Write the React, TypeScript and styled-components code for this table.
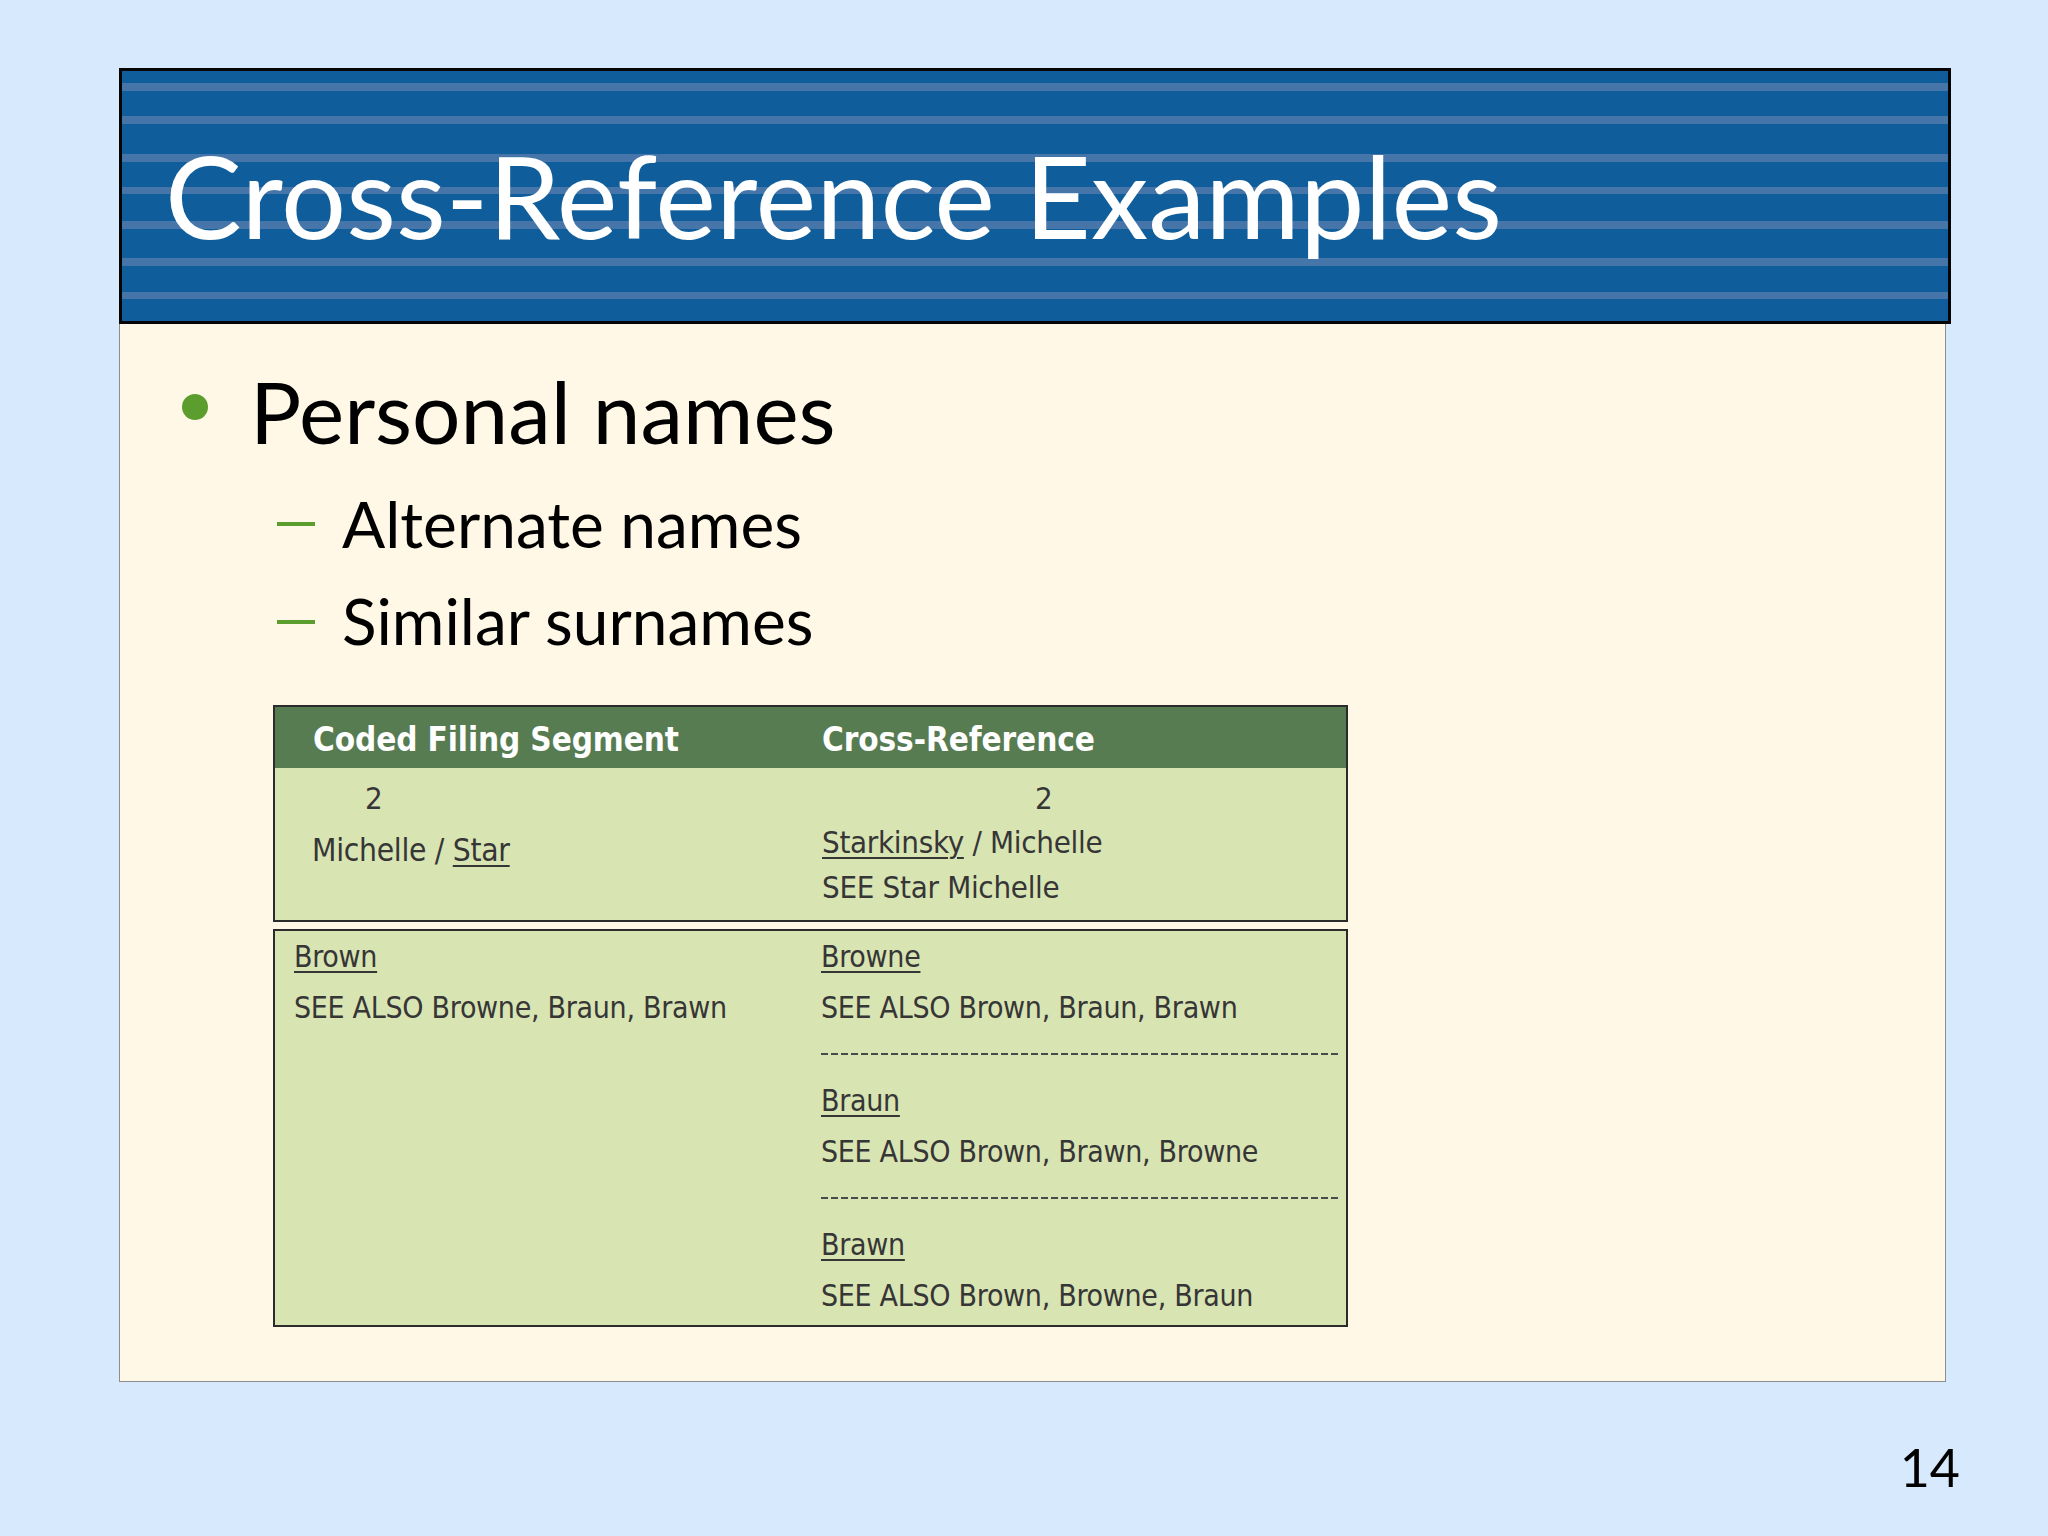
import React from "react";
import styled, { createGlobalStyle } from "styled-components";

const GlobalStyle = createGlobalStyle`
  html, body { margin: 0; padding: 0; background: #d7e9fc; }
  body { font-family: Lato, "Open Sans", sans-serif; }
`;

const Page = styled.div`
  width: 2048px;
  height: 1536px;
  box-sizing: border-box;
  padding: 68px 0 0 119px;
  display: flex;
  flex-direction: column;
  background: #d7e9fc;
`;

const Slide = styled.div`
  width: 1832px;
  display: flex;
  flex-direction: column;
`;

const B = "#0f5e9b";
const S = "#4676a9";

const TitleBar = styled.header`
  box-sizing: border-box;
  height: 256px;
  border: 3px solid #050505;
  padding: 66px 0 0 43px;
  background: linear-gradient(
    to bottom,
    ${B} 0 12px, ${S} 12px 20px, ${B} 20px 45px, ${S} 45px 53px,
    ${B} 53px 83px, ${S} 83px 91px, ${B} 91px 116px, ${S} 116px 123px,
    ${B} 123px 150px, ${S} 150px 158px, ${B} 158px 187px, ${S} 187px 195px,
    ${B} 195px 221px, ${S} 221px 228px, ${B} 228px
  );
`;

const Title = styled.h1`
  margin: 0;
  font-family: Lato, sans-serif;
  font-weight: 400;
  font-size: 115px;
  line-height: 1;
  color: #ffffff;
  white-space: nowrap;
`;

const Body = styled.section`
  box-sizing: border-box;
  width: 1827px;
  height: 1058px;
  background: #fff8e6;
  border: 1px solid #8d8d8d;
  border-top: none;
  padding: 36px 0 0 62px;
  display: flex;
  flex-direction: column;
`;

const MainItem = styled.div`
  display: flex;
  align-items: center;
  gap: 42px;
  font-family: Lato, sans-serif;
  font-size: 85.5px;
  line-height: 1.2;
  color: #000;
`;

const Dot = styled.span`
  width: 26px;
  height: 26px;
  border-radius: 50%;
  background: #5b9e2e;
  margin-bottom: 8px;
  flex: none;
`;

const SubList = styled.div`
  display: flex;
  flex-direction: column;
  gap: 21px;
  margin: 23px 0 0 95px;
`;

const SubItem = styled.div`
  display: flex;
  align-items: center;
  gap: 27px;
  font-family: Lato, sans-serif;
  font-size: 64px;
  line-height: 1.2;
  color: #000;
`;

const Dash = styled.span`
  width: 38px;
  height: 4px;
  background: #5b9e2e;
  flex: none;
`;

const TableWrap = styled.div`
  margin: 45px 0 0 91px;
  width: 1075px;
  display: flex;
  flex-direction: column;
  gap: 7px;
  font-family: "Liberation Sans Narrow", "DejaVu Sans Condensed", "Roboto Condensed", Roboto, sans-serif;
  color: #363636;
`;

const Box = styled.div`
  box-sizing: border-box;
  border: 2px solid #2b2b2b;
  background: #d9e4b3;
  display: grid;
  grid-template-columns: 545px 1fr;
`;

const HeadCell = styled.div<{ $pad: number }>`
  height: 61px;
  background: #577c52;
  color: #ffffff;
  font-weight: 700;
  font-size: 33px;
  letter-spacing: -0.1px;
  display: flex;
  align-items: center;
  padding-left: ${(p) => p.$pad}px;
  padding-top: 4px;
  box-sizing: border-box;
`;

const Cell = styled.div<{ $pad: number; $top: number; $bottom: number }>`
  display: flex;
  flex-direction: column;
  padding: ${(p) => p.$top}px 0 ${(p) => p.$bottom}px ${(p) => p.$pad}px;
`;

const Line = styled.div<{ $h: number; $indent?: number; $gap?: number; $size?: number }>`
  height: ${(p) => p.$h}px;
  line-height: ${(p) => p.$h}px;
  font-size: ${(p) => p.$size ?? 30}px;
  letter-spacing: -0.3px;
  white-space: nowrap;
  margin-left: ${(p) => p.$indent ?? 0}px;
  margin-top: ${(p) => p.$gap ?? 0}px;
`;

const U = styled.span`
  text-decoration: underline;
  text-decoration-thickness: 2px;
  text-underline-offset: 4px;
`;

const Divider = styled.div`
  height: 42px;
  display: flex;
  align-items: center;
  padding-right: 7px;
  &::before {
    content: "";
    flex: 1;
    height: 2px;
    background: repeating-linear-gradient(to right, #4a4a4a 0 7px, transparent 7px 10px);
  }
`;

const Footer = styled.div`
  display: flex;
  justify-content: flex-end;
  padding-right: 88px;
  margin-top: 59px;
  font-family: Lato, sans-serif;
  font-size: 52px;
  line-height: 1;
  color: #000;
`;

const crossRefs = [
  { name: "Browne", see: "SEE ALSO Brown, Braun, Brawn" },
  { name: "Braun", see: "SEE ALSO Brown, Brawn, Browne" },
  { name: "Brawn", see: "SEE ALSO Brown, Browne, Braun" },
];

export default function App() {
  return (
    <>
      <GlobalStyle />
      <Page>
        <Slide>
          <TitleBar>
            <Title>Cross-Reference Examples</Title>
          </TitleBar>
          <Body>
            <MainItem>
              <Dot />
              <span>Personal names</span>
            </MainItem>
            <SubList>
              <SubItem>
                <Dash />
                <span>Alternate names</span>
              </SubItem>
              <SubItem>
                <Dash />
                <span>Similar surnames</span>
              </SubItem>
            </SubList>
            <TableWrap>
              <Box>
                <HeadCell $pad={38}>Coded Filing Segment</HeadCell>
                <HeadCell $pad={2}>Cross-Reference</HeadCell>
                <Cell $pad={37} $top={8} $bottom={10}>
                  <Line $h={44} $indent={53} $size={31}>2</Line>
                  <Line $h={44} $gap={8} $size={31.5}>
                    Michelle / <U>Star</U>
                  </Line>
                </Cell>
                <Cell $pad={2} $top={8} $bottom={10}>
                  <Line $h={44} $indent={213} $size={31}>2</Line>
                  <Line $h={45} $size={31}>
                    <U>Starkinsky</U> / Michelle
                  </Line>
                  <Line $h={45} $size={31}>SEE Star Michelle</Line>
                </Cell>
              </Box>
              <Box>
                <Cell $pad={19} $top={0} $bottom={4}>
                  <Line $h={51}>
                    <U>Brown</U>
                  </Line>
                  <Line $h={51}>SEE ALSO Browne, Braun, Brawn</Line>
                </Cell>
                <Cell $pad={1} $top={0} $bottom={4}>
                  {crossRefs.map((r, i) => (
                    <React.Fragment key={r.name}>
                      {i > 0 && <Divider />}
                      <Line $h={51}>
                        <U>{r.name}</U>
                      </Line>
                      <Line $h={51}>{r.see}</Line>
                    </React.Fragment>
                  ))}
                </Cell>
              </Box>
            </TableWrap>
          </Body>
        </Slide>
        <Footer>14</Footer>
      </Page>
    </>
  );
}
